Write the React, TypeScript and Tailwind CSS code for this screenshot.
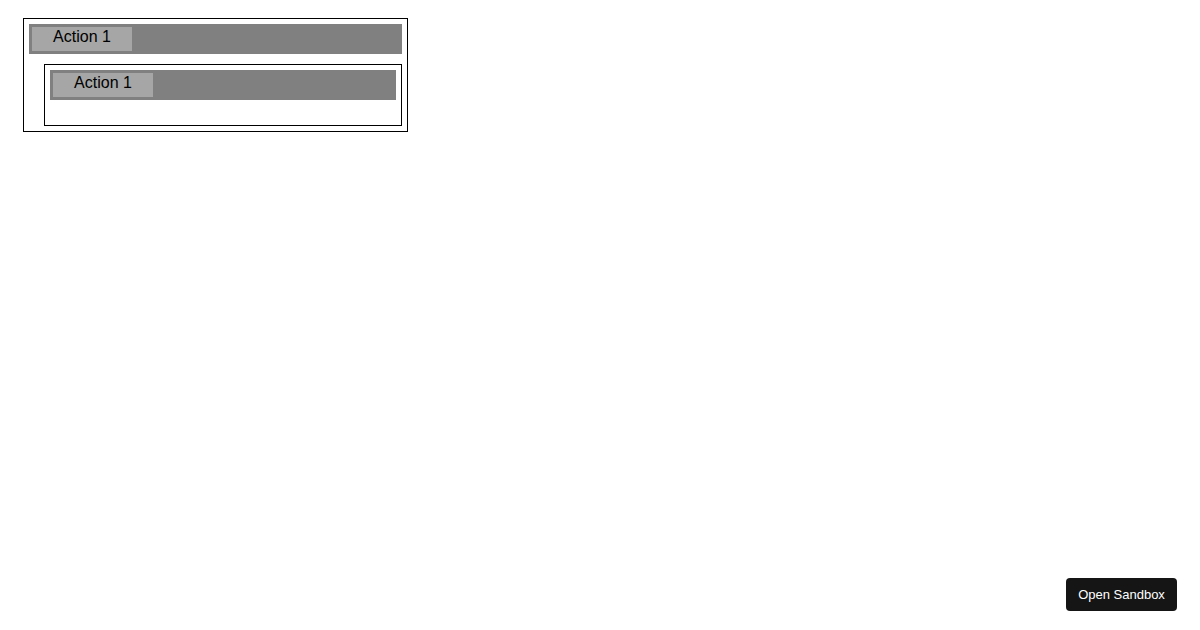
function Toolbar() {
  return (
    <div className="h-[30px] bg-[#808080] p-[3px] flex">
      <button className="w-[100px] h-[24px] bg-[#a6a6a6] text-black text-[16px] leading-[20px] flex items-start justify-center">
        Action 1
      </button>
    </div>
  );
}

export default function App() {
  return (
    <div className="min-h-[630px] bg-white pt-[18px] pl-[23px]" style={{ fontFamily: '"Liberation Sans", Arial, sans-serif' }}>
      {/* Outer frame */}
      <div className="w-[385px] border border-black p-[5px]">
        <Toolbar />
        {/* Nested frame */}
        <div className="mt-[10px] ml-[15px] border border-black p-[5px]">
          <Toolbar />
          <div className="h-[20px]" />
        </div>
      </div>

      <button className="fixed right-[23px] bottom-[19px] w-[111px] h-[33px] rounded-[4px] bg-[#151515] text-white text-[13px]">
        Open Sandbox
      </button>
    </div>
  );
}
